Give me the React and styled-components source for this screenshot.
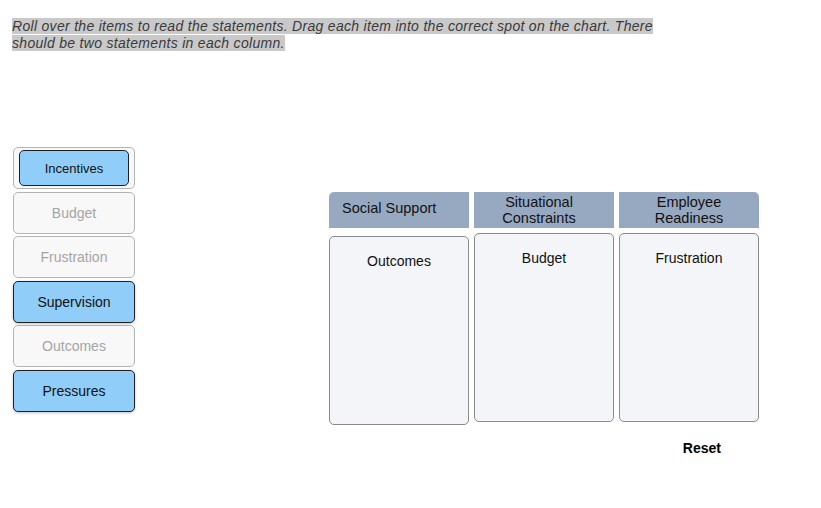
import React from "react";
import styled, { createGlobalStyle } from "styled-components";

const GlobalStyle = createGlobalStyle`
  body {
    margin: 0;
    background: #ffffff;
    font-family: "Liberation Sans", Arial, sans-serif;
  }
`;

const Page = styled.div`
  width: 821px;
  height: 508px;
  padding: 18px 0 0 12px;
  box-sizing: border-box;
`;

const Instructions = styled.p`
  margin: 0;
  font-size: 14px;
  line-height: 17px;
  font-style: italic;
  letter-spacing: 0.3px;
  color: #3a3a3a;
  span {
    background: #c9c9c9;
  }
`;

const Board = styled.div`
  display: flex;
  gap: 194px;
  margin-top: 95px;
  padding-left: 1px;
`;

const Bank = styled.div`
  display: flex;
  flex-direction: column;
  gap: 2.6px;
  width: 122px;
`;

const Item = styled.div`
  height: 42px;
  box-sizing: border-box;
  border-radius: 5px;
  display: flex;
  align-items: center;
  justify-content: center;
  font-size: 14px;
  border: 1px solid ${(p) => (p.$filled ? "#1f1f1f" : "#b4b4b4")};
  background: ${(p) => (p.$filled ? "#90cdf8" : "#f8f8f8")};
  color: ${(p) => (p.$filled ? "#111" : "#a5a5a5")};
  box-shadow: ${(p) => (p.$filled ? "0 1px 3px rgba(0,0,0,0.25)" : "none")};
`;

const Focused = styled.div`
  height: 42px;
  box-sizing: border-box;
  border-radius: 5px;
  border: 1px solid #b4b4b4;
  background: #f8f8f8;
  padding: 2px 5px;
  display: flex;
`;

const FocusedInner = styled.div`
  flex: 1;
  border-radius: 5px;
  border: 1px solid #1f1f1f;
  background: #90cdf8;
  display: flex;
  align-items: center;
  justify-content: center;
  font-size: 13px;
  color: #111;
`;

const Chart = styled.div`
  display: flex;
  flex-direction: column;
  margin-top: 45px;
`;

const Columns = styled.div`
  display: flex;
  gap: 5px;
`;

const Column = styled.div`
  width: 140px;
  display: flex;
  flex-direction: column;
  gap: 5px;
`;

const Header = styled.div`
  height: 36px;
  box-sizing: border-box;
  background: #97a9c1;
  display: flex;
  align-items: center;
  justify-content: ${(p) => (p.$left ? "flex-start" : "center")};
  padding: 0 ${(p) => p.$shift || 0}px ${(p) => (p.$left ? 3 : 0)}px
    ${(p) => (p.$left ? 13 : 0)}px;
  text-align: center;
  font-size: 14.5px;
  line-height: 16.5px;
  color: #111;
  border-top-left-radius: ${(p) => (p.$first ? "5px" : "0")};
  border-top-right-radius: ${(p) => (p.$last ? "5px" : "0")};
`;

const Drop = styled.div`
  height: 189px;
  box-sizing: border-box;
  margin-top: ${(p) => p.$offset || 0}px;
  border: 1px solid #8a8a8a;
  border-radius: 5px;
  background: #f3f5f8;
  padding-top: 16px;
  text-align: center;
  font-size: 14px;
  color: #111;
`;

const Footer = styled.div`
  display: flex;
  justify-content: flex-end;
  padding-right: 38px;
  margin-top: 15px;
`;

const ResetButton = styled.button`
  border: none;
  background: none;
  padding: 0;
  font-family: "Liberation Sans", Arial, sans-serif;
  font-weight: bold;
  font-size: 14px;
  color: #000;
  cursor: pointer;
`;

const bank = [
  { label: "Budget", filled: false },
  { label: "Frustration", filled: false },
  { label: "Supervision", filled: true },
  { label: "Outcomes", filled: false },
  { label: "Pressures", filled: true },
];

const columns = [
  { title: "Social Support", left: true, item: "Outcomes", offset: 3 },
  { title: ["Situational", "Constraints"], item: "Budget", shift: 10 },
  { title: ["Employee", "Readiness"], item: "Frustration" },
];

export default function App() {
  return (
    <Page>
      <GlobalStyle />
      <Instructions>
        <span>
          Roll over the items to read the statements. Drag each item into the
          correct spot on the chart. There
        </span>
        <br />
        <span>should be two statements in each column.</span>
      </Instructions>
      <Board>
        <Bank>
          <Focused>
            <FocusedInner>Incentives</FocusedInner>
          </Focused>
          {bank.map((b) => (
            <Item key={b.label} $filled={b.filled}>
              {b.label}
            </Item>
          ))}
        </Bank>
        <Chart>
          <Columns>
            {columns.map((c, i) => (
              <Column key={i}>
                <Header
                  $left={c.left}
                  $shift={c.shift}
                  $first={i === 0}
                  $last={i === columns.length - 1}
                >
                  {Array.isArray(c.title) ? (
                    <div>
                      {c.title[0]}
                      <br />
                      {c.title[1]}
                    </div>
                  ) : (
                    c.title
                  )}
                </Header>
                <Drop $offset={c.offset}>{c.item}</Drop>
              </Column>
            ))}
          </Columns>
          <Footer>
            <ResetButton>Reset</ResetButton>
          </Footer>
        </Chart>
      </Board>
    </Page>
  );
}
